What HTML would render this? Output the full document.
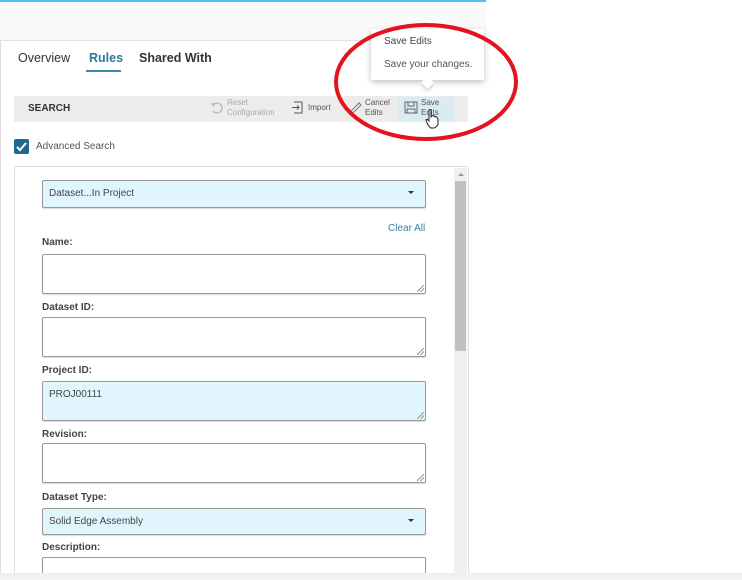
<!DOCTYPE html>
<html style="overflow:hidden;width:742px;height:580px"><head><meta charset="utf-8"><style>
body{margin:0;width:742px;height:580px;position:relative;overflow:hidden;background:#fff;font-family:"Liberation Sans",sans-serif;color:#333}
.a{position:absolute}
.lbl{position:absolute;left:42px;font-size:10px;font-weight:bold;color:#444}
.ta{position:absolute;left:42px;width:382px;border:1px solid #999;border-radius:2px;background:#fff;box-shadow:0 1px 1px rgba(0,0,0,.15)}
.blue{background:#e1f5fd}
.grip{position:absolute;right:1px;bottom:1px;width:7px;height:7px;background:linear-gradient(135deg,transparent 45%,#999 45%,#999 55%,transparent 55%,transparent 70%,#999 70%,#999 80%,transparent 80%)}
.car{position:absolute;right:11px;top:10px;width:0;height:0;border-left:3px solid transparent;border-right:3px solid transparent;border-top:3px solid #333}
.tb{position:absolute;font-size:8px;color:#555;line-height:10px}
</style></head><body>
<div class="a" style="left:0;top:0;width:486px;height:2px;background:#4cc3f0"></div>
<div class="a" style="left:0;top:2px;width:486px;height:38px;background:#fafafa;border-bottom:1px solid #e2e2e2"></div>
<div class="a" style="left:0;top:41px;width:1px;height:539px;background:#ddd"></div>
<div class="a" style="left:18px;top:51px;font-size:12.5px;color:#333">Overview</div>
<div class="a" style="left:89px;top:51px;font-size:12.5px;color:#2a7a9a;font-weight:bold">Rules</div>
<div class="a" style="left:86px;top:70px;width:35px;height:2px;background:#3a8fae"></div>
<div class="a" style="left:139px;top:51px;font-size:12.5px;color:#333;font-weight:bold">Shared With</div>
<div class="a" style="left:14px;top:96px;width:454px;height:26px;background:#ececec"></div>
<div class="a" style="left:28px;top:103px;font-size:10px;font-weight:bold;color:#333">SEARCH</div>
<svg class="a" style="left:210px;top:101px" width="14" height="14" viewBox="0 0 14 14"><path d="M3 4 A5 5 0 1 1 3 10" fill="none" stroke="#aaa" stroke-width="1"/><path d="M1 3 L4 3 L4 6" fill="none" stroke="#aaa"/></svg>
<div class="tb" style="left:227px;top:98px;color:#aaa">Reset<br>Configuration</div>
<svg class="a" style="left:292px;top:101px" width="12" height="13" viewBox="0 0 12 13"><path d="M2 1 H10 V12 H2 M0 6.5 H7 M5 4.5 L7 6.5 L5 8.5" fill="none" stroke="#555"/></svg>
<div class="tb" style="left:308px;top:103px">Import</div>
<svg class="a" style="left:349px;top:101px" width="14" height="14" viewBox="0 0 14 14"><path d="M2 12 L3 9 L10 2 L12 4 L5 11 Z" fill="none" stroke="#777"/></svg>
<div class="tb" style="left:365px;top:98px">Cancel<br>Edits</div>
<div class="a" style="left:398px;top:97px;width:56px;height:24px;background:#d9ecf1"></div>
<svg class="a" style="left:404px;top:101px" width="14" height="13" viewBox="0 0 14 13"><rect x="1" y="1" width="12" height="11" fill="none" stroke="#666"/><rect x="4" y="1" width="6" height="4" fill="none" stroke="#666"/><rect x="3" y="8" width="8" height="4" fill="none" stroke="#666"/></svg>
<div class="tb" style="left:421px;top:98px">Save<br>Edits</div>
<svg class="a" style="left:425px;top:109px" width="14" height="20" viewBox="0 0 14 20"><path d="M4 1 Q5 0 6 1 V8 L7 7 Q8 6 9 7 L10 8 Q11 7 12 8.5 L13 10 V15 Q12 18 9 19 H6 Q4 18 2 14 L1 11 Q1 10 2.5 10.5 L4 12 Z" fill="#fff" stroke="#222" stroke-width="1"/></svg>
<div class="a" style="left:371px;top:29px;width:113px;height:51px;background:#fff;box-shadow:0 2px 6px rgba(0,0,0,.25)"></div>
<div class="a" style="left:423px;top:78px;width:9px;height:9px;background:#fff;transform:rotate(45deg);box-shadow:2px 2px 3px rgba(0,0,0,.15)"></div>
<div class="a" style="left:371px;top:29px;width:113px;height:51px;background:#fff"></div>
<div class="a" style="left:384px;top:36px;font-size:10px;color:#444">Save Edits</div>
<div class="a" style="left:384px;top:59px;font-size:10px;color:#555">Save your changes.</div>
<svg class="a" style="left:0;top:0" width="742" height="580"><ellipse cx="426" cy="82" rx="90" ry="57" fill="none" stroke="#e3141f" stroke-width="4"/></svg>
<div class="a" style="left:14px;top:139px;width:15px;height:15px;background:#1e6a8f;border-radius:2px"></div>
<svg class="a" style="left:14px;top:139px" width="15" height="15"><path d="M3 8 L6 11 L12 4" fill="none" stroke="#fff" stroke-width="2"/></svg>
<div class="a" style="left:36px;top:141px;font-size:10px;color:#555">Advanced Search</div>
<div class="a" style="left:14px;top:166px;width:453px;height:420px;border:1px solid #ddd;border-radius:3px"></div>
<div class="a" style="left:454px;top:168px;width:13px;height:410px;background:#f0f0f0"></div>
<div class="a" style="left:455px;top:181px;width:11px;height:170px;background:#c1c1c1"></div>
<div class="a" style="left:458px;top:173px;width:0;height:0;border-left:3px solid transparent;border-right:3px solid transparent;border-bottom:3px solid #999"></div>
<div class="ta blue" style="top:180px;height:26px"><div class="a" style="left:6px;top:7px;font-size:10px;color:#444">Dataset...In Project</div><div class="car"></div></div>
<div class="a" style="left:388px;top:223px;font-size:10px;color:#3a7fa0">Clear All</div>
<div class="lbl" style="top:237px">Name:</div>
<div class="ta" style="top:254px;height:38px"><div class="grip"></div></div>
<div class="lbl" style="top:302px">Dataset ID:</div>
<div class="ta" style="top:317px;height:38px"><div class="grip"></div></div>
<div class="lbl" style="top:365px">Project ID:</div>
<div class="ta blue" style="top:381px;height:38px"><div class="a" style="left:6px;top:7px;font-size:10px;color:#444">PROJ00111</div><div class="grip"></div></div>
<div class="lbl" style="top:429px">Revision:</div>
<div class="ta" style="top:443px;height:38px"><div class="grip"></div></div>
<div class="lbl" style="top:492px">Dataset Type:</div>
<div class="ta blue" style="top:508px;height:25px"><div class="a" style="left:6px;top:7px;font-size:10px;color:#444">Solid Edge Assembly</div><div class="car"></div></div>
<div class="lbl" style="top:542px">Description:</div>
<div class="ta" style="top:557px;height:38px"></div>
<div class="a" style="left:0;top:573px;width:742px;height:7px;background:linear-gradient(#eee,#f6f6f6)"></div>
</body></html>
